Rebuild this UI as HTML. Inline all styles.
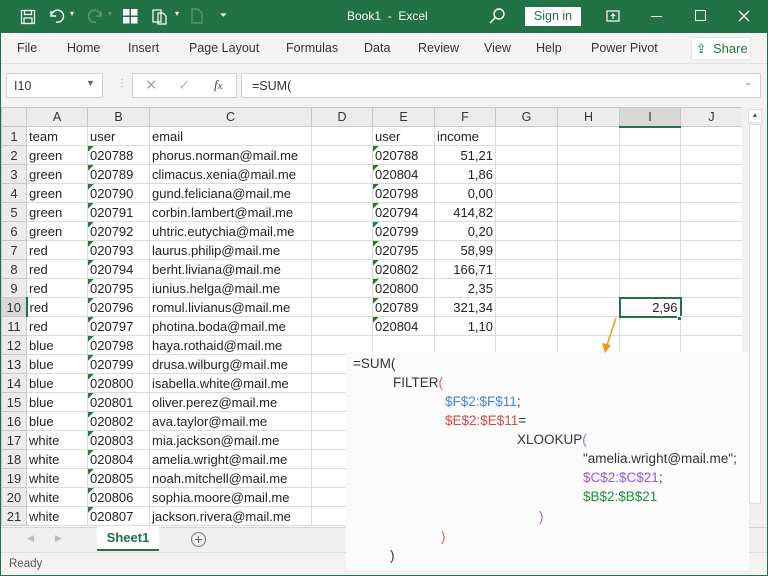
<!DOCTYPE html>
<html><head><meta charset="utf-8"><style>
*{margin:0;padding:0;box-sizing:border-box}
body{width:768px;height:576px;overflow:hidden;background:#fff;font-family:"Liberation Sans",sans-serif;position:relative}
.abs{position:absolute}
#title{left:0;top:0;width:768px;height:33px;background:#217346;color:#fff;font-size:12px}
#tabs{left:0;top:33px;width:768px;height:31px;background:#f3f3f3;font-size:12.5px;color:#333;border-bottom:1px solid #e1e1e1}
#tabs span{position:absolute;top:8px}
#fbar{left:0;top:64px;width:768px;height:43px;background:#f3f3f3}
.box{position:absolute;background:#fff;border:1px solid #d0d0d0;height:25px;top:73px}
table{position:absolute;left:1px;top:107px;border-collapse:collapse;table-layout:fixed;font-size:13px;color:#222}
td{height:19px;border:1px solid #dadada;padding:0 2px;white-space:nowrap;overflow:hidden;line-height:17px}
th{height:19px;background:#ececec;border:1px solid #c8c8c8;font-weight:normal;font-size:12.5px;color:#333;text-align:center}
td.r{text-align:right;background:#ececec;border-color:#c8c8c8;text-align:center;color:#333;padding:0}
.t{background:linear-gradient(135deg,#1e7e34 0,#1e7e34 4px,transparent 4px) no-repeat}
.n{text-align:right}
#ov{left:346px;top:352px;width:403px;height:218px;background:#fbfbfb;font-size:13.5px;color:#333}
#ov div{position:absolute}
</style></head><body>
<div id="title" class="abs">
<svg class="abs" style="left:20px;top:9px" width="16" height="16" viewBox="0 0 16 16" fill="none" stroke="#fff" stroke-width="1.2"><rect x="1.5" y="1.5" width="13" height="13"/><rect x="4.5" y="1.5" width="7" height="4"/><rect x="4" y="9" width="8" height="5.5"/></svg>
<svg class="abs" style="left:48px;top:8px" width="20" height="16" viewBox="0 0 20 16" fill="none" stroke="#fff" stroke-width="1.4"><path d="M3 3v5h5"/><path d="M3.5 8A6 6 0 1 1 8 14"/></svg>
<span class="abs" style="left:70px;top:9px;font-size:8px">▾</span>
<svg class="abs" style="left:86px;top:8px" width="20" height="16" viewBox="0 0 20 16" fill="none" stroke="#5c9a78" stroke-width="1.4"><path d="M15 3v5h-5"/><path d="M14.5 8A6 6 0 1 0 10 14"/></svg>
<span class="abs" style="left:108px;top:9px;font-size:8px;color:#5c9a78">▾</span>
<svg class="abs" style="left:123px;top:9px" width="15" height="15"><rect x="0" y="0" width="6.5" height="6.5" fill="#fff"/><rect x="8" y="0" width="6.5" height="6.5" fill="#fff"/><rect x="0" y="8" width="6.5" height="6.5" fill="#fff"/><rect x="8" y="8" width="6.5" height="6.5" fill="#fff"/></svg>
<svg class="abs" style="left:152px;top:8px" width="16" height="17" fill="none" stroke="#fff" stroke-width="1.2"><rect x="1" y="2" width="8" height="12"/><path d="M6 5h5l3 3v8H6z"/></svg>
<span class="abs" style="left:175px;top:9px;font-size:8px">▾</span>
<svg class="abs" style="left:190px;top:8px" width="14" height="17" fill="none" stroke="#5c9a78" stroke-width="1.2"><path d="M2 1h6l4 4v10H2z"/></svg>
<span class="abs" style="left:220px;top:10px;font-size:9px">⏷</span>
<span class="abs" style="left:347px;top:9px">Book1 &nbsp;-&nbsp; Excel</span>
<svg class="abs" style="left:488px;top:7px" width="18" height="18" fill="none" stroke="#fff" stroke-width="1.4"><circle cx="11" cy="7" r="5"/><path d="M7.5 10.5 2 16"/></svg>
<div class="abs" style="left:525px;top:7px;width:56px;height:19px;background:#fff;color:#217346;text-align:center;line-height:19px;font-size:12.5px">Sign in</div>
<svg class="abs" style="left:606px;top:10px" width="14" height="12" fill="none" stroke="#fff" stroke-width="1.2"><rect x="1" y="1" width="12" height="10"/><path d="M7 9V4M5 6l2-2 2 2"/></svg>
<div class="abs" style="left:651px;top:16px;width:11px;height:1px;background:#fff"></div>
<div class="abs" style="left:695px;top:10px;width:11px;height:11px;border:1.2px solid #fff"></div>
<svg class="abs" style="left:738px;top:10px" width="12" height="12" stroke="#fff" stroke-width="1.3"><path d="M1 1l10 10M11 1 1 11"/></svg>
</div>
<div id="tabs" class="abs">
<span style="left:17px">File</span><span style="left:67px">Home</span><span style="left:128px">Insert</span><span style="left:189px">Page Layout</span><span style="left:286px">Formulas</span><span style="left:364px">Data</span><span style="left:418px">Review</span><span style="left:484px">View</span><span style="left:536px">Help</span><span style="left:591px">Power Pivot</span>
<div class="abs" style="left:691px;top:4px;width:60px;height:23px;background:#fff;border:1px solid #e6e6e6"></div>
<span style="left:696px;color:#217346">⇪</span><span style="left:713px;color:#217346;font-size:13px">Share</span>
</div>
<div id="fbar" class="abs"></div>
<div class="box" style="left:6px;width:97px;font-size:12.5px;padding:5px 7px;color:#333">I10<span style="position:absolute;right:7px;top:4px;font-size:9px;color:#666">▼</span></div>
<div class="abs" style="left:117px;top:78px;font-size:10px;color:#aaa">⋮</div>
<div class="box" style="left:132px;width:105px"><span class="abs" style="left:12px;top:2px;color:#aaa;font-size:15px">✕</span><span class="abs" style="left:45px;top:2px;color:#bbb;font-size:15px">✓</span><span class="abs" style="left:81px;top:3px;font-family:'Liberation Serif',serif;font-style:italic;font-size:13px;color:#444">f<small>x</small></span></div>
<div class="box" style="left:241px;width:520px;font-size:12.5px;padding:5px 10px;color:#333">=SUM(<span style="position:absolute;right:8px;top:3px;font-size:9px;color:#666">⌄</span></div>
<table>
<colgroup><col style="width:25px"><col style="width:61px"><col style="width:62px"><col style="width:162px"><col style="width:61px"><col style="width:62px"><col style="width:61px"><col style="width:62px"><col style="width:62px"><col style="width:61px"><col style="width:62px"></colgroup>
<tr><th></th><th>A</th><th>B</th><th>C</th><th>D</th><th>E</th><th>F</th><th>G</th><th>H</th><th style="background:#d8d8d8;border-bottom:2px solid #217346">I</th><th>J</th></tr>
<tr><td class="r">1</td><td>team</td><td>user</td><td>email</td><td></td><td>user</td><td>income</td><td></td><td></td><td></td><td></td></tr>
<tr><td class="r">2</td><td>green</td><td class="t">020788</td><td>phorus.norman@mail.me</td><td></td><td class="t">020788</td><td class="n">51,21</td><td></td><td></td><td></td><td></td></tr>
<tr><td class="r">3</td><td>green</td><td class="t">020789</td><td>climacus.xenia@mail.me</td><td></td><td class="t">020804</td><td class="n">1,86</td><td></td><td></td><td></td><td></td></tr>
<tr><td class="r">4</td><td>green</td><td class="t">020790</td><td>gund.feliciana@mail.me</td><td></td><td class="t">020798</td><td class="n">0,00</td><td></td><td></td><td></td><td></td></tr>
<tr><td class="r">5</td><td>green</td><td class="t">020791</td><td>corbin.lambert@mail.me</td><td></td><td class="t">020794</td><td class="n">414,82</td><td></td><td></td><td></td><td></td></tr>
<tr><td class="r">6</td><td>green</td><td class="t">020792</td><td>uhtric.eutychia@mail.me</td><td></td><td class="t">020799</td><td class="n">0,20</td><td></td><td></td><td></td><td></td></tr>
<tr><td class="r">7</td><td>red</td><td class="t">020793</td><td>laurus.philip@mail.me</td><td></td><td class="t">020795</td><td class="n">58,99</td><td></td><td></td><td></td><td></td></tr>
<tr><td class="r">8</td><td>red</td><td class="t">020794</td><td>berht.liviana@mail.me</td><td></td><td class="t">020802</td><td class="n">166,71</td><td></td><td></td><td></td><td></td></tr>
<tr><td class="r">9</td><td>red</td><td class="t">020795</td><td>iunius.helga@mail.me</td><td></td><td class="t">020800</td><td class="n">2,35</td><td></td><td></td><td></td><td></td></tr>
<tr><td class="r" style="background:#d8d8d8;border-right:2px solid #217346">10</td><td>red</td><td class="t">020796</td><td>romul.livianus@mail.me</td><td></td><td class="t">020789</td><td class="n">321,34</td><td></td><td></td><td class="n" style="border:2px solid #217346">2,96</td><td></td></tr>
<tr><td class="r">11</td><td>red</td><td class="t">020797</td><td>photina.boda@mail.me</td><td></td><td class="t">020804</td><td class="n">1,10</td><td></td><td></td><td></td><td></td></tr>
<tr><td class="r">12</td><td>blue</td><td class="t">020798</td><td>haya.rothaid@mail.me</td><td></td><td></td><td></td><td></td><td></td><td></td><td></td></tr>
<tr><td class="r">13</td><td>blue</td><td class="t">020799</td><td>drusa.wilburg@mail.me</td><td></td><td></td><td></td><td></td><td></td><td></td><td></td></tr>
<tr><td class="r">14</td><td>blue</td><td class="t">020800</td><td>isabella.white@mail.me</td><td></td><td></td><td></td><td></td><td></td><td></td><td></td></tr>
<tr><td class="r">15</td><td>blue</td><td class="t">020801</td><td>oliver.perez@mail.me</td><td></td><td></td><td></td><td></td><td></td><td></td><td></td></tr>
<tr><td class="r">16</td><td>blue</td><td class="t">020802</td><td>ava.taylor@mail.me</td><td></td><td></td><td></td><td></td><td></td><td></td><td></td></tr>
<tr><td class="r">17</td><td>white</td><td class="t">020803</td><td>mia.jackson@mail.me</td><td></td><td></td><td></td><td></td><td></td><td></td><td></td></tr>
<tr><td class="r">18</td><td>white</td><td class="t">020804</td><td>amelia.wright@mail.me</td><td></td><td></td><td></td><td></td><td></td><td></td><td></td></tr>
<tr><td class="r">19</td><td>white</td><td class="t">020805</td><td>noah.mitchell@mail.me</td><td></td><td></td><td></td><td></td><td></td><td></td><td></td></tr>
<tr><td class="r">20</td><td>white</td><td class="t">020806</td><td>sophia.moore@mail.me</td><td></td><td></td><td></td><td></td><td></td><td></td><td></td></tr>
<tr><td class="r">21</td><td>white</td><td class="t">020807</td><td>jackson.rivera@mail.me</td><td></td><td></td><td></td><td></td><td></td><td></td><td></td></tr>
</table>
<div class="abs" style="left:677px;top:316px;width:5px;height:5px;background:#217346;border:1px solid #fff"></div>
<div class="abs" style="left:742px;top:107px;width:26px;height:420px;background:#f0f0f0"></div>
<div class="abs" style="left:748px;top:109px;width:14px;height:14px;background:#fff;border:1px solid #ddd;font-size:7px;text-align:center;color:#555;line-height:12px">▲</div>
<div class="abs" style="left:749px;top:124px;width:12px;height:380px;background:#fff;border:1px solid #ddd"></div>
<div class="abs" style="left:0;top:527px;width:768px;height:25px;background:#f0f0f0;border-top:1px solid #d4d4d4"></div>
<span class="abs" style="left:27px;top:533px;font-size:9px;color:#bbb">◀</span><span class="abs" style="left:55px;top:533px;font-size:9px;color:#bbb">▶</span>
<div class="abs" style="left:97px;top:527px;width:62px;height:24px;background:#fff;border-bottom:2px solid #217346;color:#217346;font-weight:bold;font-size:13px;text-align:center;line-height:22px">Sheet1</div>
<div class="abs" style="left:191px;top:532px;width:15px;height:15px;border:1px solid #777;border-radius:50%;text-align:center;line-height:12px;font-size:14px;color:#666">+</div>
<div class="abs" style="left:0;top:552px;width:768px;height:24px;background:#f3f3f3;border-top:1px solid #ddd;font-size:11.5px;color:#555;padding:5px 9px">Ready</div>
<div class="abs" style="left:0;top:33px;width:1px;height:543px;background:#217346"></div>
<div class="abs" style="left:767px;top:33px;width:1px;height:543px;background:#217346"></div>
<div class="abs" style="left:0;top:575px;width:768px;height:1px;background:#217346"></div>
<div id="ov" class="abs">
<div style="left:7px;top:4px">=SUM(</div>
<div style="left:47px;top:23px">FILTER<span style="color:#e06060">(</span></div>
<div style="left:99px;top:42px;color:#4a7fd8">$F$2:$F$11<span style="color:#333">;</span></div>
<div style="left:99px;top:61px;color:#d24a4a">$E$2:$E$11<span style="color:#333">=</span></div>
<div style="left:171px;top:80px">XLOOKUP<span style="color:#9a6ad8">(</span></div>
<div style="left:237px;top:99px">"amelia.wright@mail.me";</div>
<div style="left:237px;top:118px;color:#9a56d0">$C$2:$C$21<span style="color:#333">;</span></div>
<div style="left:237px;top:137px;color:#1e8e3e">$B$2:$B$21</div>
<div style="left:193px;top:157px;color:#9a6ad8">)</div>
<div style="left:95px;top:177px;color:#e06060">)</div>
<div style="left:44px;top:196px">)</div>
</div>
<svg class="abs" style="left:598px;top:316px" width="22" height="40"><path d="M18 2 8 32" stroke="#f0961e" stroke-width="1.5" fill="none"/><path d="M4 27l3 10 6-8z" fill="#f0961e"/></svg>
</body></html>
